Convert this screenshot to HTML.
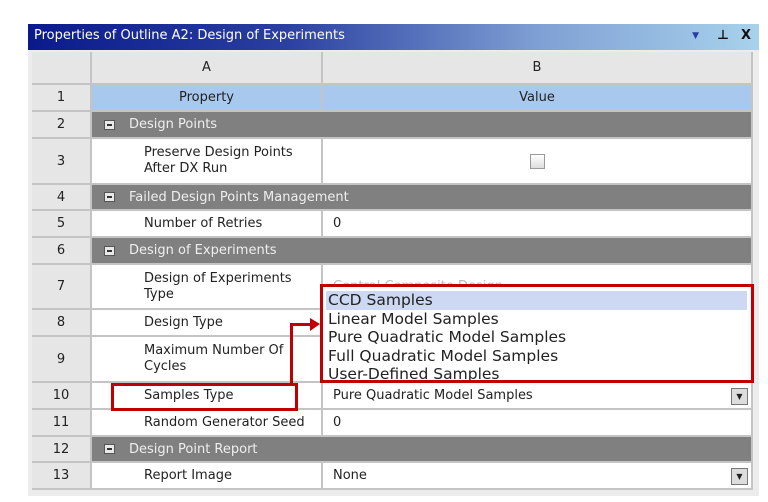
<!DOCTYPE html><html><head><style>
body{margin:0;width:768px;height:502px;background:#fff;position:relative;overflow:hidden;font-family:"DejaVu Sans","Liberation Sans",sans-serif;font-size:13px;color:#222}
.a{position:absolute;box-sizing:border-box}
.title{left:28px;top:24px;width:731px;height:26px;background:linear-gradient(90deg,#0a1a8c 0%,#2a3fa0 35%,#7fa0d4 70%,#a8d2ec 100%);color:#fff;font-size:13px;line-height:24px;padding-left:6px}
.panel{left:28px;top:50px;width:731px;height:446px;background:#ececec}
.c{position:absolute;box-sizing:border-box;border-right:2px solid #c4c4c4;border-bottom:2px solid #c4c4c4;display:flex;align-items:center}
.n{background:#e6e6e6;justify-content:center}
.w{background:#fff}
.g{background:#808080;color:#eee}
.sq{display:inline-block;width:9px;height:8px;background:#e8e8e8;border:1px solid #555;margin:0 14px 0 12px;position:relative}
.sq:after{content:"";position:absolute;left:2px;top:3px;width:5px;height:2px;background:#333}
.red{border:3px solid #c00000}
</style></head><body>
<div class="a title">Properties of Outline A2: Design of Experiments
<span style="position:absolute;right:60px;top:0;color:#2a3fa0;font-size:9px">▼</span>
<span style="position:absolute;right:30px;top:0;color:#111;font-weight:bold">⊥</span>
<span style="position:absolute;right:8px;top:0;color:#111;font-weight:bold">X</span></div>
<div class="a panel"></div>
<div id="t"></div>
<script>
var rows=[[52,85,'','A','B','h'],[85,112,'1','Property','Value','p'],[112,139,'2','Design Points','','g'],[139,185,'3','Preserve Design Points<br>After DX Run','CB','w'],[185,211,'4','Failed Design Points Management','','g'],[211,238,'5','Number of Retries','0','w'],[238,265,'6','Design of Experiments','','g'],[265,310,'7','Design of Experiments<br>Type','<span style="color:#bbb">Central Composite Design</span>','w'],[310,337,'8','Design Type','','w'],[337,383,'9','Maximum Number Of<br>Cycles','','w'],[383,410,'10','Samples Type','Pure Quadratic Model Samples','d'],[410,437,'11','Random Generator Seed','0','w'],[437,463,'12','Design Point Report','','g'],[463,490,'13','Report Image','None','d']];
var h='';rows.forEach(function(r){var t=r[0],hh=r[1]-r[0],k=r[5];
h+='<div class="c n" style="left:32px;top:'+t+'px;width:60px;height:'+hh+'px">'+r[2]+'</div>';
if(k=='g'){h+='<div class="c g" style="left:92px;top:'+t+'px;width:661px;height:'+hh+'px"><span class="sq"></span>'+r[3]+'</div>';return;}
var bg=k=='h'?'#e6e6e6':k=='p'?'#a8c8ee':'#fff';var al=(k=='h'||k=='p')?'justify-content:center;':'padding-left:52px;';
h+='<div class="c" style="background:'+bg+';'+al+'left:92px;top:'+t+'px;width:231px;height:'+hh+'px;line-height:16px">'+r[3]+'</div>';
var v=r[4];if(v=='CB')v='<span style="display:inline-block;width:13px;height:13px;border:1px solid #999;background:linear-gradient(#fff,#ddd)"></span>';
var al2=(k=='h'||k=='p'||r[4]=='CB')?'justify-content:center;':'padding-left:10px;';
h+='<div class="c" style="background:'+bg+';'+al2+'left:323px;top:'+t+'px;width:430px;height:'+hh+'px">'+v+(k=='d'?'<span style="position:absolute;right:3px;top:5px;width:15px;height:15px;background:#ddd;border:1px solid #777;font-size:8px;text-align:center;line-height:15px">▼</span>':'')+'</div>';});
document.getElementById('t').innerHTML=h;
</script>
<div class="a red" style="left:320px;top:284px;width:434px;height:99px;background:#fff;overflow:hidden;font-size:15.5px;line-height:18.5px;padding:4px 4px 0 5px">
<div style="background:#cdd8f2;margin-left:-2px;padding-left:2px">CCD Samples</div>Linear Model Samples<br>Pure Quadratic Model Samples<br>Full Quadratic Model Samples<br>User-Defined Samples</div>
<div class="a red" style="left:111px;top:383px;width:187px;height:28px"></div>
<div class="a" style="left:290px;top:323px;width:3px;height:62px;background:#c00000"></div>
<div class="a" style="left:290px;top:323px;width:22px;height:3px;background:#c00000"></div>
<div class="a" style="left:310px;top:318px;width:0;height:0;border-top:6px solid transparent;border-bottom:7px solid transparent;border-left:10px solid #c00000"></div>
</body></html>
